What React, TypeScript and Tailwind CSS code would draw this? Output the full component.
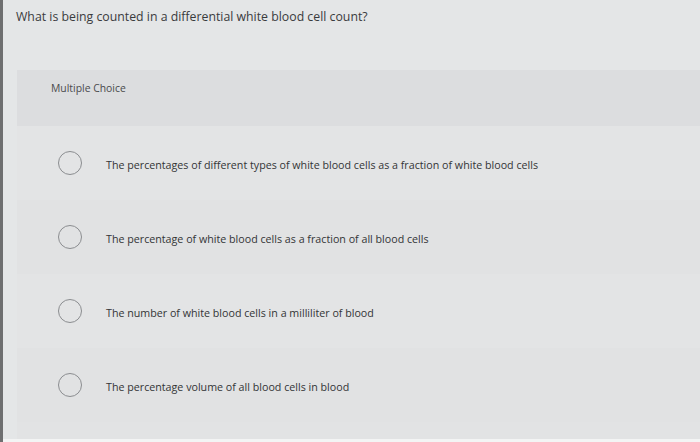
const options = [
  'The percentages of different types of white blood cells as a fraction of white blood cells',
  'The percentage of white blood cells as a fraction of all blood cells',
  'The number of white blood cells in a milliliter of blood',
  'The percentage volume of all blood cells in blood',
];

export default function App() {
  return (
    <div
      className="w-[700px] h-[442px] overflow-hidden flex bg-[#e4e6e7] text-[#3b3c3e]"
      style={{ fontFamily: '"Open Sans", Arial, sans-serif' }}
    >
      <div className="w-[3px] bg-[#6e6f70] shrink-0" />
      <div className="flex-1 flex flex-col">
        <div className="h-[70px] pl-[13px] pt-[8px] text-[12.3px] text-[#3a3b3d]">
          What is being counted in a differential white blood cell count?
        </div>
        <div className="flex-1 ml-[14px] bg-[#dcdddf] flex flex-col">
          <div className="h-[56px] pl-[34px] pt-[11px] text-[10.4px] text-[#4a4b4d]">Multiple Choice</div>
          <div className="flex-1 flex flex-col bg-[#e2e3e4]">
            {options.map((text, i) => (
              <div
                key={i}
                className={`h-[74px] flex items-center pl-[41px] ${i % 2 === 0 ? 'bg-[#e3e4e5]' : 'bg-[#e1e2e3]'}`}
              >
                <div className="w-[24px] h-[24px] rounded-full border-[1.5px] border-[#8b8d90] shrink-0" />
                <div className="ml-[24px] pt-[4px] text-[10.7px] text-[#333436]">{text}</div>
              </div>
            ))}
            <div className="flex-1" />
          </div>
        </div>
        <div className="h-[3px] bg-[#f3f4f4]" />
      </div>
    </div>
  );
}
